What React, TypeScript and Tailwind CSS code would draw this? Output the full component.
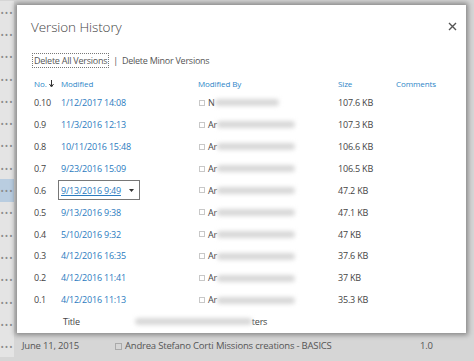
import React from 'react';

type Version = { no: string; modified: string; by: string; size: string; blur: number };

const versions: Version[] = [
  { no: '0.10', modified: '1/12/2017 14:08', by: 'N', size: '107.6 KB', blur: 64 },
  { no: '0.9', modified: '11/3/2016 12:13', by: 'Ar', size: '107.3 KB', blur: 78 },
  { no: '0.8', modified: '10/11/2016 15:48', by: 'Ar', size: '106.6 KB', blur: 78 },
  { no: '0.7', modified: '9/23/2016 15:09', by: 'Ar', size: '106.5 KB', blur: 78 },
  { no: '0.6', modified: '9/13/2016 9:49', by: 'Ar', size: '47.2 KB', blur: 78 },
  { no: '0.5', modified: '9/13/2016 9:38', by: 'Ar', size: '47.1 KB', blur: 78 },
  { no: '0.4', modified: '5/10/2016 9:32', by: 'Ar', size: '47 KB', blur: 78 },
  { no: '0.3', modified: '4/12/2016 16:35', by: 'Ar', size: '37.6 KB', blur: 78 },
  { no: '0.2', modified: '4/12/2016 11:41', by: 'Ar', size: '37 KB', blur: 78 },
  { no: '0.1', modified: '4/12/2016 11:13', by: 'Ar', size: '35.3 KB', blur: 78 },
];

const cols = 'grid grid-cols-[27px_137px_140px_58px_1fr]';

const Dots = () => (
  <span className="text-[9px] leading-none tracking-[1px] text-[#8a8a8a]">•••</span>
);

const VersionHistory: React.FC = () => {
  return (
    <div className="absolute left-[17px] top-[5px] w-[449px] h-[328px] bg-white shadow-[0_0_5px_2px_rgba(0,0,0,0.38)] flex flex-col">
      <div className="flex items-start justify-between pl-[14px] pr-[9px] pt-[12px]">
        <h1 className="text-[13.5px] leading-[20px] font-light tracking-[-0.1px] text-[#444]">Version History</h1>
        <svg width="9" height="9" viewBox="0 0 9 9" className="mt-[5px]">
          <path d="M1 1 L8 8 M8 1 L1 8" stroke="#555" strokeWidth="1.4" />
        </svg>
      </div>

      <div className="flex items-center pl-[15px] mt-[16px] h-[15px] text-[9px] tracking-[-0.25px] text-[#555]">
        <span className="border border-dotted border-[#777] px-[1px] leading-[13px]">Delete All Versions</span>
        <span className="mx-[4px]">|</span>
        <span>Delete Minor Versions</span>
      </div>

      <div className={`${cols} pl-[17px] mt-[8px] h-[16px] items-center text-[8px] tracking-[-0.1px] text-[#2e86c8]`}>
        <div className="flex items-center gap-[2px]">
          <span>No.</span>
          <svg width="5" height="8" viewBox="0 0 5 8">
            <path d="M2.5 0 V6 M0.5 4 L2.5 7 L4.5 4" stroke="#333" strokeWidth="1" fill="none" />
          </svg>
        </div>
        <div>Modified</div>
        <div>Modified By</div>
        <div>Size</div>
        <div>Comments</div>
      </div>

      {versions.map((v) => {
        const focused = v.no === '0.6';
        return (
          <div key={v.no} className={`${cols} pl-[17px] h-[22.2px] items-center text-[9px] tracking-[-0.2px] text-[#444]`}>
            <div>{v.no}</div>
            <div>
              {focused ? (
                <div className="inline-flex items-center ml-[-3px] pl-[2px] w-[82px] h-[20px] border border-[#777]">
                  <span className="text-[#2b7bc0] underline">{v.modified}</span>
                  <svg width="5" height="3" viewBox="0 0 5 3" className="ml-auto mr-[5px]">
                    <path d="M0 0 H5 L2.5 3 Z" fill="#333" />
                  </svg>
                </div>
              ) : (
                <span className="text-[#2b7bc0]">{v.modified}</span>
              )}
            </div>
            <div className="flex items-center">
              <span className="w-[6px] h-[6px] border border-[#c8c8c8] ml-[1px] mr-[3px]" />
              <span>{v.by}</span>
              <span
                className="h-[7px] bg-[#d8d8d8] blur-[2px] rounded-sm"
                style={{ width: v.blur }}
              />
            </div>
            <div>{v.size}</div>
            <div />
          </div>
        );
      })}

      <div className="flex items-center h-[22.2px] pl-[46px] text-[9px] tracking-[-0.2px] text-[#444]">
        <span>Title</span>
        <span className="ml-[55px] w-[117px] h-[7px] bg-[#d8d8d8] blur-[2px] rounded-sm" />
        <span>ters</span>
      </div>
    </div>
  );
};

const App: React.FC = () => {
  return (
    <div
      className="relative w-[474px] h-[361px] overflow-hidden bg-[#d6d6d6]"
      style={{ fontFamily: '"Open Sans", "Noto Sans", sans-serif' }}
    >
      <div className="flex flex-col pt-[1px]">
        {Array.from({ length: 15 }).map((_, i) => (
          <div
            key={i}
            className={`h-[22.3px] w-[14px] flex items-center justify-center ${i === 8 ? 'bg-[#b9cde0]' : 'bg-[#e4e4e4]'}`}
          >
            <Dots />
          </div>
        ))}
        <div className="flex items-center h-[22px] text-[9.5px] tracking-[-0.2px] text-[#555] whitespace-nowrap">
          <div className="w-[14px] h-full shrink-0 flex items-center justify-center bg-[#e4e4e4]">
            <Dots />
          </div>
          <span className="ml-[8px] w-[93px] shrink-0">June 11, 2015</span>
          <span className="w-[7px] h-[7px] shrink-0 border border-[#aaa] mr-[3px]" />
          <span className="w-[91px] shrink-0">Andrea Stefano Corti</span>
          <span className="w-[204px] shrink-0">Missions creations - BASICS</span>
          <span>1.0</span>
        </div>
      </div>
      <VersionHistory />
    </div>
  );
};

export default App;
